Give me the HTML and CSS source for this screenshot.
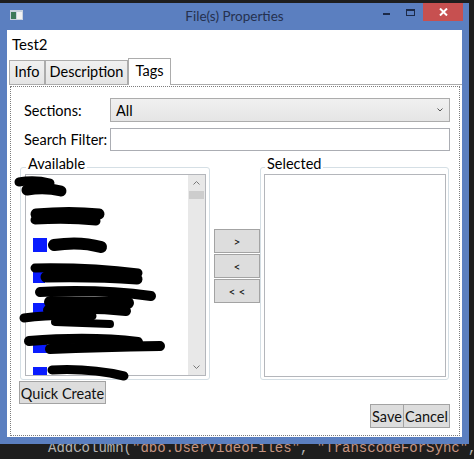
FILE: index.html
```html
<!DOCTYPE html>
<html>
<head>
<meta charset="utf-8">
<title>File(s) Properties</title>
<link rel="stylesheet" href="styles.css">
</head>
<body>
<div class="desktop">
  <div class="editor-top"></div>
  <div class="stage">
    <div class="window">
      <div class="titlebar">
        <div class="tb-left">
          <svg class="app-icon" width="13" height="10" viewBox="0 0 13 10">
            <rect x="0" y="0" width="13" height="10" fill="#c9d3e0"/>
            <rect x="1" y="2" width="5" height="7" fill="#3d7a5a"/>
            <rect x="7" y="2" width="5" height="7" fill="#f2f2f2"/>
          </svg>
        </div>
        <div class="tb-title">File(s) Properties</div>
        <div class="tb-right">
          <span class="ctl ctl-min"><svg width="7" height="18" viewBox="0 0 7 18"><rect x="0" y="10" width="7" height="2" fill="#1c2a48"/></svg></span>
          <span class="ctl ctl-max"><svg width="9" height="7" viewBox="0 0 9 7"><rect x="0.5" y="0.5" width="8" height="6" fill="none" stroke="#1c2a48"/><rect x="0" y="0" width="9" height="2" fill="#1c2a48"/></svg></span>
          <span class="ctl ctl-close"><svg width="9" height="8" viewBox="0 0 9 8"><path d="M1 0.5 L8 7.5 M8 0.5 L1 7.5" stroke="#ffffff" stroke-width="2"/></svg></span>
        </div>
      </div>
      <div class="client">
        <div class="doc-name">Test2</div>
        <div class="tabs">
          <div class="tab tab-info">Info</div>
          <div class="tab tab-desc">Description</div>
          <div class="tab tab-tags active">Tags</div>
        </div>
        <div class="panel">
          <div class="focus">
            <div class="form">
              <label class="lbl lbl-first">Sections:</label>
              <div class="combo">
                <span class="combo-text">All</span>
                <svg width="6" height="4" viewBox="0 0 6 4"><path d="M0.5 0.5 L3 3 L5.5 0.5" fill="none" stroke="#555" stroke-width="1"/></svg>
              </div>
              <label class="lbl">Search Filter:</label>
              <div class="textbox"></div>
            </div>
            <div class="groups">
              <div class="group group-avail">
                <div class="group-label">Available</div>
                <div class="group-box">
                  <div class="list list-avail">
                    <div class="list-items"></div>
                    <div class="scrollbar">
                      <div class="sb-btn"><svg width="7" height="4" viewBox="0 0 7 4"><path d="M0.5 3.5 L3.5 0.5 L6.5 3.5" fill="none" stroke="#777" stroke-width="1"/></svg></div>
                      <div class="sb-thumb"></div>
                      <div class="sb-track"></div>
                      <div class="sb-btn"><svg width="7" height="4" viewBox="0 0 7 4"><path d="M0.5 0.5 L3.5 3.5 L6.5 0.5" fill="none" stroke="#777" stroke-width="1"/></svg></div>
                    </div>
                    <svg class="redact" width="200" height="210" viewBox="10 174 200 210">
                      <defs>
                        <clipPath id="listclip"><rect x="26" y="175" width="162" height="200"/></clipPath>
                      </defs>
                      <g fill="#0a1cff" clip-path="url(#listclip)">
                        <rect x="33" y="238" width="14" height="14"/>
                        <rect x="33" y="270" width="12" height="13"/>
                        <rect x="33" y="303" width="14" height="12"/>
                        <rect x="33" y="342" width="14" height="11"/>
                        <rect x="33" y="367" width="14" height="12"/>
                      </g>
                      <g fill="none" stroke="#000" stroke-linecap="round" stroke-linejoin="round">
                        <path d="M19 182 Q34 179 50 183" stroke-width="9"/>
                        <path d="M27 190 Q45 187 61 191" stroke-width="11"/>
                        <path d="M36 214 Q70 211 99 214" stroke-width="11"/>
                        <path d="M35 220 Q68 218 96 221" stroke-width="9"/>
                        <path d="M54 245 Q80 241 101 247" stroke-width="12"/>
                        <path d="M35 268 Q90 267 138 273" stroke-width="9"/>
                        <path d="M46 277 Q95 276 137 279" stroke-width="11"/>
                        <path d="M40 292 Q100 289 151 296" stroke-width="10"/>
                        <path d="M50 302 L128 303" stroke-width="12"/>
                        <path d="M48 310 Q90 307 126 311" stroke-width="10"/>
                        <path d="M24 318 Q55 314 92 316" stroke-width="9"/>
                        <path d="M55 322 L110 324" stroke-width="8"/>
                        <path d="M29 341 Q90 336 138 342" stroke-width="10"/>
                        <path d="M50 349 Q100 347 160 346" stroke-width="10"/>
                        <path d="M52 370 Q90 368 124 376" stroke-width="9"/>
                      </g>
                    </svg>
                  </div>
                </div>
              </div>
              <div class="movers">
                <button class="btn btn-move">&gt;</button>
                <button class="btn btn-move">&lt;</button>
                <button class="btn btn-move">&lt; &lt;</button>
              </div>
              <div class="group group-sel">
                <div class="group-label">Selected</div>
                <div class="group-box">
                  <div class="list list-sel"></div>
                </div>
              </div>
            </div>
            <button class="btn btn-quick">Quick Create</button>
            <div class="actions">
              <button class="btn btn-save">Save</button>
              <button class="btn btn-cancel">Cancel</button>
            </div>
          </div>
        </div>
      </div>
    </div>
    <div class="editor-side"></div>
  </div>
  <div class="code"><span class="code-line">AddColumn(<span class="str">"dbo.UserVideoFiles"</span>, <span class="str">"TranscodeForSync"</span>, c =&gt; c.Boolean());</span></div>
</div>
</body>
</html>
```

FILE: styles.css
```css
html, body {
  margin: 0;
  padding: 0;
  background: #1e1e1e;
}

body {
  font-family: Lato, "Noto Sans", "DejaVu Sans", sans-serif;
}

.desktop {
  width: 474px;
  height: 459px;
  overflow: hidden;
  display: flex;
  flex-direction: column;
}

.editor-top {
  height: 3px;
  flex: none;
}

.stage {
  height: 441px;
  flex: none;
  display: flex;
}

.editor-side {
  flex: 1;
}

.window {
  width: 469px;
  flex: none;
  background: #5b7fc0;
  display: flex;
  flex-direction: column;
}

/* title bar */
.titlebar {
  height: 27px;
  flex: none;
  display: grid;
  grid-template-columns: 1fr auto 1fr;
}

.tb-left {
  padding: 7px 0 0 10px;
}

.app-icon {
  display: block;
}

.tb-title {
  font-size: 13.5px;
  line-height: 27px;
  color: #25314f;
  white-space: nowrap;
}

.tb-right {
  display: flex;
  justify-content: flex-end;
  align-items: flex-start;
  padding-right: 6px;
}

.ctl {
  width: 24px;
  height: 18px;
  display: flex;
  align-items: center;
  justify-content: center;
}

.ctl svg {
  display: block;
}

.ctl-close {
  width: 40px;
  margin-left: 1px;
  background: #c75050;
}

/* client */
.client {
  margin: 0 7px 7px;
  height: 407px;
  flex: none;
  background: #ffffff;
  display: flex;
  flex-direction: column;
  color: #000;
  font-size: 14.5px;
}

.doc-name {
  height: 28px;
  box-sizing: border-box;
  padding: 1px 0 0 5px;
  line-height: 27px;
  flex: none;
  font-size: 15px;
}

.tabs {
  height: 26px;
  flex: none;
  display: flex;
  align-items: flex-end;
  padding-left: 2px;
  position: relative;
}

.tab {
  height: 24px;
  box-sizing: border-box;
  border: 1px solid #acacac;
  border-bottom: 0;
  background: linear-gradient(#f0f0f0, #e5e5e5);
  text-align: center;
  line-height: 22px;
  white-space: nowrap;
}

.tab-info { width: 36px; }
.tab-desc { width: 83px; }
.tab-tags { width: 43px; }

.tab.active {
  height: 27px;
  margin-bottom: -1px;
  padding-top: 1px;
  background: #ffffff;
  position: relative;
  z-index: 1;
}

.panel {
  flex: 1;
  margin-left: 2px;
  border-top: 1px solid #acacac;
  display: flex;
}

.focus {
  flex: 1;
  margin: 1px 2px 1px 1px;
  border: 1px dotted #7d7d7d;
  padding: 11px 9px 0 9px;
  display: flex;
  flex-direction: column;
}

/* form */
.form {
  display: grid;
  grid-template-columns: 90px 1fr;
  grid-template-rows: 24px 23px;
  row-gap: 6px;
  align-items: center;
}

.lbl {
  padding-left: 4px;
  line-height: 18px;
  white-space: nowrap;
}

.lbl-first {
  padding-top: 2px;
}

.combo {
  height: 24px;
  box-sizing: border-box;
  border: 1px solid #acacac;
  background: linear-gradient(#f0f0f0, #e5e5e5);
  display: flex;
  align-items: center;
  justify-content: space-between;
  padding: 0 6px 0 5px;
}

.combo-text {
  line-height: 18px;
  padding-top: 2px;
}

.combo svg {
  display: block;
}

.textbox {
  height: 23px;
  box-sizing: border-box;
  border: 1px solid #abadb3;
  background: #ffffff;
}

/* groups */
.groups {
  margin-top: 4px;
  height: 225px;
  flex: none;
  display: flex;
}

.group {
  display: flex;
  flex-direction: column;
  flex: none;
}

.group-avail { width: 190px; }
.group-sel { width: 189px; }

.group-label {
  align-self: flex-start;
  position: relative;
  z-index: 1;
  background: #ffffff;
  padding: 0 2px;
  line-height: 18px;
  margin: 0 0 -6px 6px;
}

.group-sel .group-label {
  margin-left: 5px;
}

.group-box {
  flex: 1;
  border: 1px solid #d5dfe5;
  border-radius: 3px;
  display: flex;
}

.group-avail .group-box {
  padding: 6px 3px 3px 4px;
}

.group-sel .group-box {
  padding: 6px 2px 2px 3px;
}

.list {
  flex: 1;
  border: 1px solid #b4b6bb;
  background: #ffffff;
  display: flex;
}

.list-avail {
  position: relative;
}

.list-items {
  flex: 1;
}

.scrollbar {
  width: 17px;
  background: #e8e8e8;
  display: flex;
  flex-direction: column;
}

.sb-btn {
  height: 16px;
  display: flex;
  align-items: center;
  justify-content: center;
}

.sb-btn svg {
  display: block;
}

.sb-thumb {
  height: 8px;
  margin: 0 1px;
  background: #cdcdcd;
}

.sb-track {
  flex: 1;
}

.redact {
  position: absolute;
  left: -16px;
  top: -1px;
  overflow: visible;
  pointer-events: none;
}

/* buttons */
.btn {
  font-family: Lato, "Noto Sans", "DejaVu Sans", sans-serif;
  font-size: 14.5px;
  color: #111;
  background: #dddddd;
  border: 1px solid #a3a3a3;
  border-radius: 0;
  padding: 0;
  margin: 0;
  box-sizing: border-box;
  white-space: nowrap;
}

.movers {
  width: 46px;
  flex: none;
  margin: 0 0 0 4px;
  padding-top: 74px;
  display: flex;
  flex-direction: column;
  gap: 1px;
}

.btn-move {
  height: 24px;
  font-size: 12px;
}

.btn-quick {
  align-self: flex-start;
  margin: 1px 0 0 -1px;
  width: 87px;
  height: 23px;
  padding-top: 2px;
}

.actions {
  display: flex;
  justify-content: flex-end;
}

.btn-save {
  width: 34px;
  height: 24px;
}

.btn-cancel {
  width: 47px;
  height: 24px;
  margin-left: -1px;
}

/* editor text below the window */
.code {
  height: 15px;
  flex: none;
  overflow: hidden;
  padding-left: 48px;
  font-family: "Liberation Mono", "DejaVu Sans Mono", monospace;
  font-size: 14px;
  line-height: 15px;
  color: #b4b4b4;
  white-space: nowrap;
}

.code-line {
  display: block;
  margin-top: -3px;
}

.code .str {
  color: #c69582;
}
```
